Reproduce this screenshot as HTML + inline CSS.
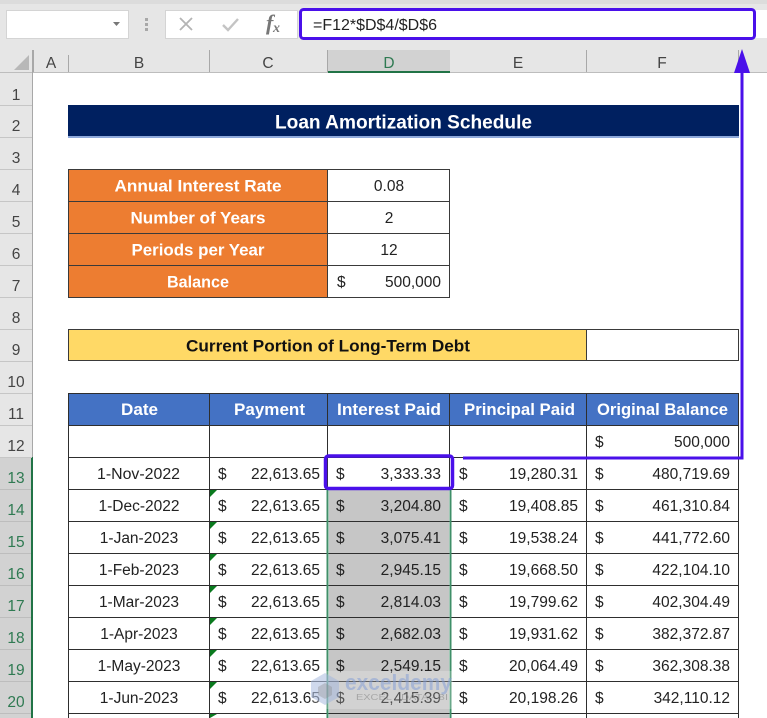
<!DOCTYPE html>
<html><head><meta charset="utf-8"><style>
html,body{margin:0;padding:0;background:#fff;width:767px;height:718px;overflow:hidden}
svg{display:block}
text{font-family:"Liberation Sans",sans-serif;font-size:15.5px;fill:#222}
.b{font-weight:bold;fill:#fff;font-size:16.5px;text-anchor:middle}
.m{text-anchor:middle}
.e{text-anchor:end}
.h{text-anchor:middle;fill:#444}
.g{text-anchor:middle;fill:#2f7a52}
</style></head><body>
<svg width="767" height="718" viewBox="0 0 767 718" xmlns="http://www.w3.org/2000/svg">
<rect width="767" height="73" fill="#e6e6e6"/>
<rect width="767" height="4" fill="#dcdcdc"/>
<rect x="0" y="73" width="33" height="645" fill="#e6e6e6"/>
<!-- top bar -->
<rect x="6.500" y="10.500" width="122" height="28" fill="#fff" stroke="#d4d4d4"/>
<polygon points="113,22 120,22 116.500,26" fill="#777"/>
<g fill="#a8a8a8"><rect x="145" y="18" width="3" height="3"/><rect x="145" y="23" width="3" height="3"/><rect x="145" y="28" width="3" height="3"/></g>
<rect x="165.500" y="10.500" width="132" height="28" fill="#fff" stroke="#d4d4d4"/>
<path d="M180 18 L192 30 M192 18 L180 30" stroke="#b4b4b4" stroke-width="1.800" fill="none"/>
<path d="M223 25 L228 30 L238 19" stroke="#c4c4c4" stroke-width="2.400" fill="none"/>
<text x="266" y="30" style="font-family:'Liberation Serif',serif;font-style:italic;font-weight:bold;font-size:22px;fill:#777">f</text>
<text x="273" y="32" style="font-family:'Liberation Serif',serif;font-style:italic;font-weight:bold;font-size:14px;fill:#777">x</text>
<rect x="750" y="10" width="17" height="28" fill="#fff"/>
<rect x="300.500" y="9.500" width="454" height="29" rx="3" fill="#fff" stroke="#4a10ea" stroke-width="3"/>
<text x="313" y="30" style="font-size:15.500px" textLength="124" lengthAdjust="spacingAndGlyphs">=F12*$D$4/$D$6</text>
<!-- col header -->
<polygon points="29,55 29,70 14,70" fill="#b8b8b8"/>
<rect x="328" y="50" width="122" height="23" fill="#d2d2d2"/>
<rect x="328" y="71" width="122" height="2" fill="#217346"/>
<g stroke="#a8a8a8"><path d="M33.500 50V73M68.500 55V73M209.500 50V73M327.500 50V73M586.500 50V73M738.500 50V73" fill="none"/></g>
<path d="M0 72.500H328M450 72.500H767" stroke="#bdbdbd"/>
<path d="M32.500 50V718" stroke="#a8a8a8"/>
<text class="h" x="51" y="68">A</text><text class="h" x="139" y="68">B</text><text class="h" x="268" y="68">C</text>
<text class="g" x="389" y="68">D</text><text class="h" x="518" y="68">E</text><text class="h" x="662" y="68">F</text>
<!-- row header -->
<rect x="0" y="457" width="32" height="261" fill="#d2d2d2"/>
<rect x="31" y="457" width="2" height="261" fill="#217346"/>
<g stroke="#c6c6c6"><path d="M0 105.500H32M0 137.500H32M0 169.500H32M0 201.500H32M0 233.500H32M0 265.500H32M0 297.500H32M0 329.500H32M0 361.500H32M0 393.500H32M0 425.500H32M0 457.500H32"/></g>
<g stroke="#bdbdbd"><path d="M0 489.500H31M0 521.500H31M0 553.500H31M0 585.500H31M0 617.500H31M0 649.500H31M0 681.500H31M0 713.500H31"/></g>
<text class="h" x="16" y="100">1</text><text class="h" x="16" y="131">2</text><text class="h" x="16" y="163">3</text><text class="h" x="16" y="195">4</text><text class="h" x="16" y="227">5</text><text class="h" x="16" y="259">6</text><text class="h" x="16" y="291">7</text><text class="h" x="16" y="323">8</text><text class="h" x="16" y="355">9</text><text class="h" x="16" y="387">10</text><text class="h" x="16" y="419">11</text><text class="h" x="16" y="451">12</text>
<text class="g" x="16" y="483">13</text><text class="g" x="16" y="515">14</text><text class="g" x="16" y="547">15</text><text class="g" x="16" y="579">16</text><text class="g" x="16" y="611">17</text><text class="g" x="16" y="643">18</text><text class="g" x="16" y="675">19</text><text class="g" x="16" y="707">20</text>
<!-- title -->
<rect x="68" y="105" width="671" height="31" fill="#002060"/>
<rect x="68" y="136" width="671" height="2" fill="#8ea9db"/>
<text class="b" x="403.500" y="128.500" style="font-size:19px" textLength="257" lengthAdjust="spacingAndGlyphs">Loan Amortization Schedule</text>
<!-- params -->
<rect x="68" y="169" width="260" height="128" fill="#ed7d31"/>
<g stroke="#3a3a3a" fill="none"><rect x="68.500" y="169.500" width="381" height="128"/><path d="M68 201.500H450M68 233.500H450M68 265.500H450M327.500 169V297"/></g>
<text class="b" x="198" y="191.500" textLength="167" lengthAdjust="spacingAndGlyphs">Annual Interest Rate</text>
<text class="b" x="198" y="223.500" textLength="135" lengthAdjust="spacingAndGlyphs">Number of Years</text>
<text class="b" x="198" y="255.500" textLength="133" lengthAdjust="spacingAndGlyphs">Periods per Year</text>
<text class="b" x="198" y="287.500" textLength="62" lengthAdjust="spacingAndGlyphs">Balance</text>
<text class="m" x="389" y="191">0.08</text><text class="m" x="389" y="223">2</text><text class="m" x="389" y="255">12</text>
<text x="337" y="287">$</text><text class="e" x="441" y="287">500,000</text>
<!-- current portion -->
<rect x="68" y="329" width="519" height="32" fill="#ffd966"/>
<g stroke="#3a3a3a" fill="none"><rect x="68.500" y="329.500" width="670" height="31"/><path d="M586.500 329V361"/></g>
<text class="m" x="328" y="351.500" style="font-weight:bold;font-size:16.500px;fill:#111" textLength="284" lengthAdjust="spacingAndGlyphs">Current Portion of Long-Term Debt</text>
<!-- table -->
<rect x="68" y="393" width="671" height="32" fill="#4472c4"/>
<rect x="329" y="490" width="120" height="228" fill="#c6c6c6"/>
<g stroke="#2e2e2e" fill="none">
<path d="M68.500 393V718M209.500 393V718M327.500 393V490M449.500 393V490M586.500 393V718M738.500 393V718"/>
<path d="M68 393.500H739M68 425.500H739M68 457.500H739M68 489.500H739M68 521.500H739M68 553.500H739M68 585.500H739M68 617.500H739M68 649.500H739M68 681.500H739M68 713.500H739"/>
</g>
<path d="M327.500 490V718M450.500 490V718" stroke="#3f8f68" stroke-width="2" fill="none"/>
<text class="b" x="139.500" y="415" textLength="37" lengthAdjust="spacingAndGlyphs">Date</text>
<text class="b" x="269.500" y="415" textLength="71" lengthAdjust="spacingAndGlyphs">Payment</text>
<text class="b" x="389" y="415" textLength="104" lengthAdjust="spacingAndGlyphs">Interest Paid</text>
<text class="b" x="519.500" y="415" textLength="111" lengthAdjust="spacingAndGlyphs">Principal Paid</text>
<text class="b" x="662.500" y="415" textLength="131" lengthAdjust="spacingAndGlyphs">Original Balance</text>
<text x="595" y="447">$</text><text class="e" x="730" y="447">500,000</text>
<!-- green triangles -->
<g fill="#0a7a1e"><polygon points="210,490 217,490 210,497"/><polygon points="210,522 217,522 210,529"/><polygon points="210,554 217,554 210,561"/><polygon points="210,586 217,586 210,593"/><polygon points="210,618 217,618 210,625"/><polygon points="210,650 217,650 210,657"/><polygon points="210,682 217,682 210,689"/><polygon points="210,714 217,714 210,718"/></g>
<!-- rows -->
<g>
<text class="m" x="138.500" y="479" textLength="83" lengthAdjust="spacingAndGlyphs">1-Nov-2022</text><text x="218" y="479">$</text><text class="e" x="320" y="479">22,613.65</text><text x="336" y="479">$</text><text class="e" x="441" y="479">3,333.33</text><text x="459" y="479">$</text><text class="e" x="578" y="479">19,280.31</text><text x="595" y="479">$</text><text class="e" x="730" y="479">480,719.69</text>
<text class="m" x="139" y="511">1-Dec-2022</text><text x="218" y="511">$</text><text class="e" x="320" y="511">22,613.65</text><text x="336" y="511">$</text><text class="e" x="441" y="511">3,204.80</text><text x="459" y="511">$</text><text class="e" x="578" y="511">19,408.85</text><text x="595" y="511">$</text><text class="e" x="730" y="511">461,310.84</text>
<text class="m" x="139" y="543">1-Jan-2023</text><text x="218" y="543">$</text><text class="e" x="320" y="543">22,613.65</text><text x="336" y="543">$</text><text class="e" x="441" y="543">3,075.41</text><text x="459" y="543">$</text><text class="e" x="578" y="543">19,538.24</text><text x="595" y="543">$</text><text class="e" x="730" y="543">441,772.60</text>
<text class="m" x="139" y="575">1-Feb-2023</text><text x="218" y="575">$</text><text class="e" x="320" y="575">22,613.65</text><text x="336" y="575">$</text><text class="e" x="441" y="575">2,945.15</text><text x="459" y="575">$</text><text class="e" x="578" y="575">19,668.50</text><text x="595" y="575">$</text><text class="e" x="730" y="575">422,104.10</text>
<text class="m" x="139" y="607">1-Mar-2023</text><text x="218" y="607">$</text><text class="e" x="320" y="607">22,613.65</text><text x="336" y="607">$</text><text class="e" x="441" y="607">2,814.03</text><text x="459" y="607">$</text><text class="e" x="578" y="607">19,799.62</text><text x="595" y="607">$</text><text class="e" x="730" y="607">402,304.49</text>
<text class="m" x="139" y="639">1-Apr-2023</text><text x="218" y="639">$</text><text class="e" x="320" y="639">22,613.65</text><text x="336" y="639">$</text><text class="e" x="441" y="639">2,682.03</text><text x="459" y="639">$</text><text class="e" x="578" y="639">19,931.62</text><text x="595" y="639">$</text><text class="e" x="730" y="639">382,372.87</text>
<text class="m" x="139" y="671">1-May-2023</text><text x="218" y="671">$</text><text class="e" x="320" y="671">22,613.65</text><text x="336" y="671">$</text><text class="e" x="441" y="671">2,549.15</text><text x="459" y="671">$</text><text class="e" x="578" y="671">20,064.49</text><text x="595" y="671">$</text><text class="e" x="730" y="671">362,308.38</text>
<text class="m" x="139" y="703">1-Jun-2023</text><text x="218" y="703">$</text><text class="e" x="320" y="703">22,613.65</text><text x="336" y="703">$</text><text class="e" x="441" y="703">2,415.39</text><text x="459" y="703">$</text><text class="e" x="578" y="703">20,198.26</text><text x="595" y="703">$</text><text class="e" x="730" y="703">342,110.12</text>
</g>
<!-- watermark -->
<rect x="310" y="671" width="143" height="38" fill="#fff" opacity=".22"/>
<polygon points="325,673 339,681 339,697 325,705 311,697 311,681" fill="#9fb4dc" opacity=".5"/>
<polygon points="325,683 332,687 332,695 325,699 318,695 318,687" fill="#8a8a8a" opacity=".35"/>
<text x="345" y="690" style="font-size:22px;font-weight:bold;fill:#7f9cd6;opacity:.5" textLength="107" lengthAdjust="spacingAndGlyphs">exceldemy</text>
<text x="356" y="700" style="font-size:8.500px;fill:#888;opacity:.6" textLength="92" lengthAdjust="spacingAndGlyphs">EXCEL · DATA · BI</text>
<!-- annotations -->
<rect x="325.500" y="456" width="127" height="32.500" rx="3" fill="none" stroke="#4a10ea" stroke-width="3.500"/>
<path d="M463 458 H742 V66" fill="none" stroke="#4a10ea" stroke-width="3"/>
<polygon points="742,49 734,73 750,73" fill="#4a10ea"/>
</svg>
</body></html>
